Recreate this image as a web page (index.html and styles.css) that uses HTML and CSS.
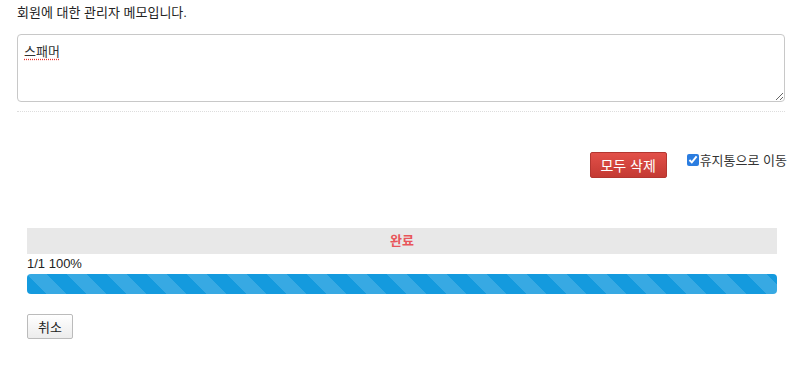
FILE: index.html
```html
<!DOCTYPE html>
<html lang="ko">
<head>
<meta charset="utf-8">
<link rel="stylesheet" href="styles.css">
</head>
<body>
<div class="page">
  <p class="memo-label">회원에 대한 관리자 메모입니다.</p>
  <textarea class="memo" spellcheck="false">스패머</textarea>
  <div class="divider"></div>
  <div class="actions">
    <button class="btn-danger">모두 삭제</button>
    <label class="trash"><input type="checkbox" checked>휴지통으로 이동</label>
  </div>
  <div class="progress-box">
    <div class="status">완료</div>
    <div class="count">1/1 100%</div>
    <div class="bar"></div>
    <button class="btn-cancel">취소</button>
  </div>
</div>
</body>
</html>
```

FILE: styles.css
```css
* { box-sizing: border-box; }
html, body { margin: 0; padding: 0; background: #fff; }
body {
  font-family: "Liberation Sans", "Noto Sans CJK KR", sans-serif;
  font-size: 13px;
  color: #222;
}
.page { padding: 0 17px 0 17px; width: 803px; }
.memo-label { margin: 0; padding-top: 5px; height: 34px; line-height: 16px; }
.memo {
  display: block;
  width: 768px;
  height: 68px;
  margin: 0;
  padding: 6px 6px;
  border: 1px solid #c8c8c8;
  border-radius: 4px;
  font-family: "Liberation Sans", "Noto Sans CJK KR", sans-serif;
  font-size: 13px;
  color: #333;
  resize: vertical;
  text-decoration-line: underline;
  text-decoration-style: dotted;
  text-decoration-color: #e8352f;
  text-underline-offset: 3px;
}
.divider { width: 768px; margin-top: 9px; border-top: 1px dotted #ddd; }
.actions {
  display: flex;
  justify-content: flex-end;
  align-items: center;
  gap: 20px;
  margin-top: 40px;
  width: 770px;
}
.btn-danger {
  height: 26px;
  width: 77px;
  padding: 0;
  font-family: "Liberation Sans", "Noto Sans CJK KR", sans-serif;
  font-size: 14px;
  color: #fff;
  border: 1px solid #b33630;
  border-radius: 2px;
  background: linear-gradient(#e25049, #c43a33);
}
.trash { display: flex; align-items: center; font-size: 13px; color: #333; margin-top: -11px; }
.trash input { width: 12px; height: 12px; margin: 0 1px 0 0; accent-color: #2b7de0; }
.progress-box { margin: 50px 0 0 10px; width: 750px; }
.status {
  height: 26px;
  background: #e8e8e8;
  color: #e8555a;
  font-weight: bold;
  text-align: center;
  line-height: 26px;
}
.count { height: 20px; line-height: 20px; color: #222; }
.bar {
  height: 20px;
  border-radius: 4px;
  background-color: #149ade;
  background-image: linear-gradient(45deg,
    rgba(255,255,255,.15) 25%, transparent 25%,
    transparent 50%, rgba(255,255,255,.15) 50%,
    rgba(255,255,255,.15) 75%, transparent 75%, transparent);
  background-size: 40px 40px;
}
.btn-cancel {
  margin-top: 20px;
  height: 25px;
  width: 46px;
  padding: 0;
  font-family: "Liberation Sans", "Noto Sans CJK KR", sans-serif;
  font-size: 13px;
  color: #222;
  border: 1px solid #bbb;
  border-radius: 2px;
  background: linear-gradient(#fff, #ececec);
}
```
